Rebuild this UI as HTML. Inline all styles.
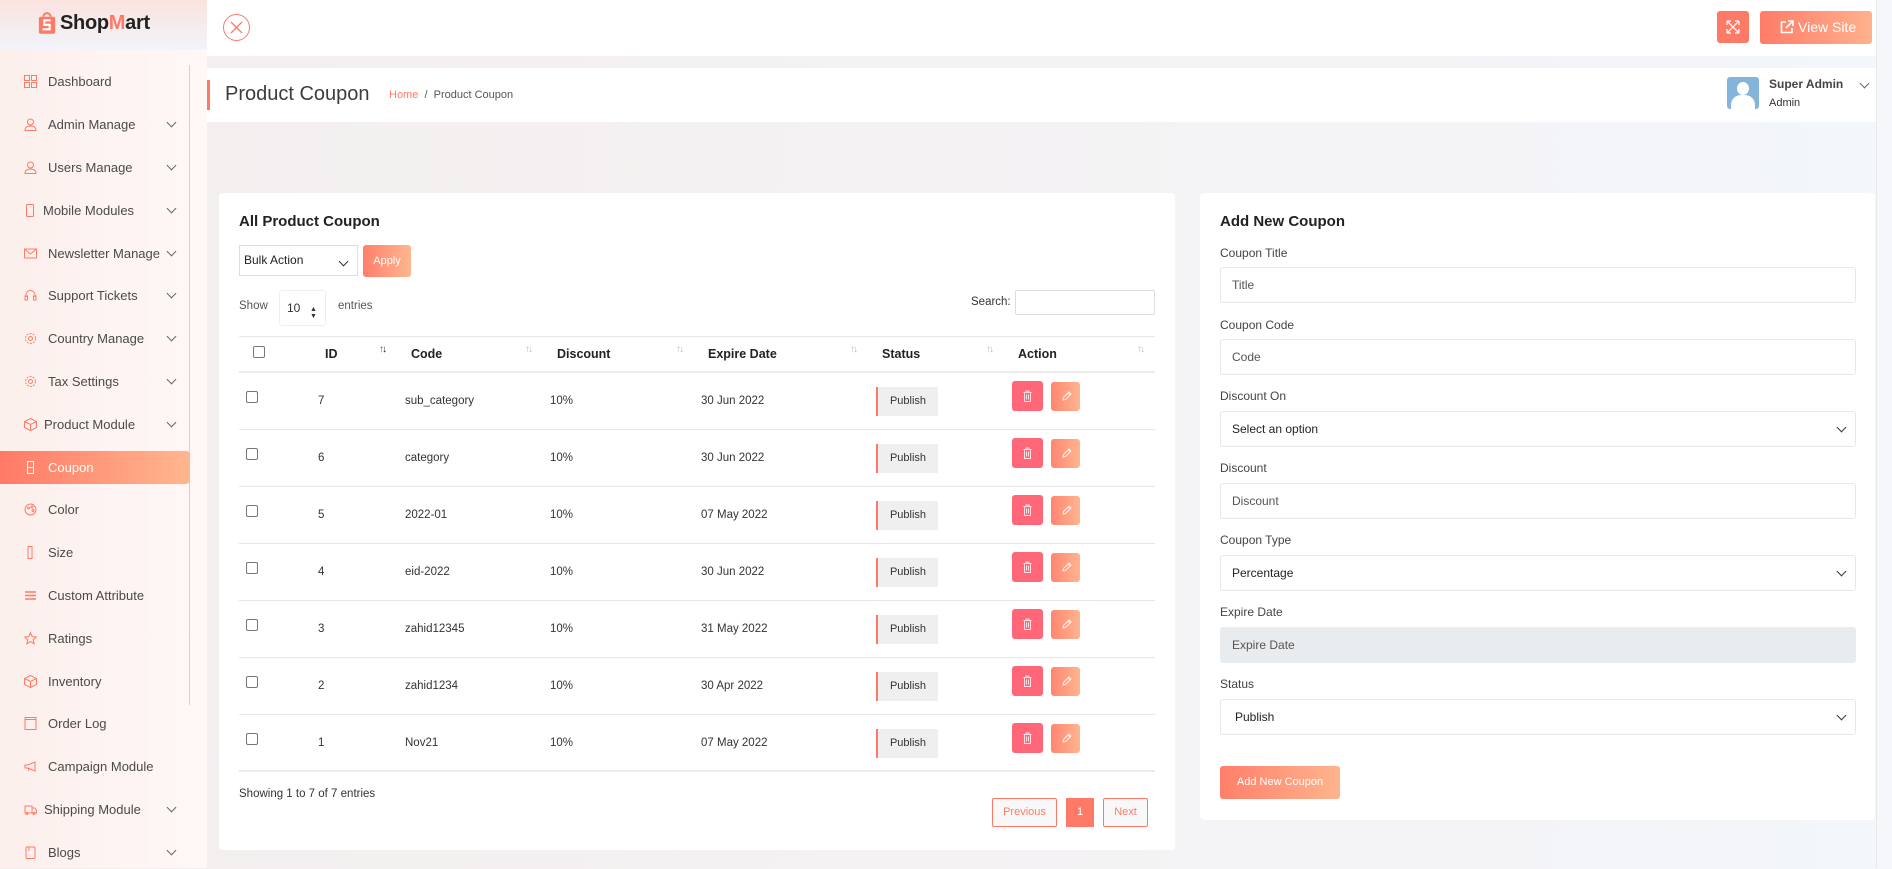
<!DOCTYPE html>
<html><head><meta charset="utf-8">
<style>
*{box-sizing:border-box;margin:0;padding:0}
body{width:1892px;height:868px;overflow:hidden;position:relative;font-family:"Liberation Sans",Arial,sans-serif;color:#333;background:linear-gradient(90deg,#f3eeee 0%,#f4f2f3 50%,#f3f6fa 100%)}
.abs{position:absolute}
#side{left:0;top:0;width:207px;height:868px;background:linear-gradient(90deg,#fcefec,#fff8f6)}
#logo{left:0;top:0;width:207px;height:50px;background:linear-gradient(180deg,#fae3df,#f1f4fa)}
.mi{position:absolute;left:0;width:190px;height:33px;font-size:13px;color:#4a4a4a;display:flex;align-items:center}
.mi .ic{position:absolute;left:24px;top:10px;width:13px;height:13px}
.mi .tx{position:absolute;left:48px}
.mi .ch{position:absolute;left:168px;top:11px;width:7px;height:7px;border-right:1.3px solid #666;border-bottom:1.3px solid #666;transform:rotate(45deg)}
.mi.act{background:linear-gradient(90deg,#ff7a66,#ffb68e);color:#fff;border-radius:0 4px 4px 0}
.card{background:#fff;border-radius:4px}
.th{position:absolute;top:337px;height:35px;line-height:35px;font-weight:bold;font-size:12.5px;color:#222}
.sa{position:absolute;top:344px;font-size:10px;color:#bbb;letter-spacing:-2px}
.row{position:absolute;left:239px;width:916px;height:57px;border-bottom:1px solid #e6e6e6;font-size:11.5px;color:#333}
.row span{position:absolute;top:0;line-height:57px}
.cb{position:absolute;width:12px;height:12px;border:1px solid #777;border-radius:2px;background:#fff}
.pub{position:absolute;left:637px;top:14px;width:62px;height:29px;background:#efefef;border-left:2px solid #ff7a66;font-size:11px;line-height:29px;text-align:center;color:#333}
.del{position:absolute;left:773px;top:8px;width:31px;height:30px;background:#ff6677;border-radius:3px}
.edt{position:absolute;left:812px;top:9px;width:29px;height:29px;background:linear-gradient(90deg,#ff8570,#ffb58f);border-radius:3px}
.del svg,.edt svg{position:absolute;left:10px;top:9px}
.lbl{position:absolute;left:1220px;font-size:12px;color:#444}
.inp{position:absolute;left:1220px;width:636px;height:36px;border:1px solid #e6e6e6;border-radius:3px;font-size:12px;color:#555;line-height:34px;padding-left:11px;background:#fff}
.sel:after{content:"";position:absolute;right:10px;top:12px;width:6px;height:6px;border-right:1.5px solid #333;border-bottom:1.5px solid #333;transform:rotate(45deg)}
</style></head><body>
<div id="side" class="abs"></div>
<div id="logo" class="abs"></div>
<svg class="abs" style="left:38px;top:11px" width="18" height="24" viewBox="0 0 20 26"><path d="M6 6a4 4 0 0 1 8 0" stroke="#ff7a66" stroke-width="2.2" fill="none"/><rect x="1" y="6" width="18" height="19" rx="2" fill="#ff7a66"/><path d="M14 10H7v5h6v5H5" stroke="#fff" stroke-width="2.3" fill="none"/></svg>
<div class="abs" style="left:60px;top:12px;font-size:20px;font-weight:bold;color:#222;letter-spacing:-0.3px">Shop<span style="color:#ff7a66">M</span>art</div>
<div class="abs" style="left:189px;top:65px;width:1px;height:640px;background:#f3c4bd"></div>

<div class="mi" style="top:65px"><svg class="ic" viewBox="0 0 13 13" fill="none" stroke="#ff7a66"><rect x=".5" y=".5" width="5" height="5"/><rect x="7.5" y=".5" width="5" height="5"/><rect x=".5" y="7.5" width="5" height="5"/><rect x="7.5" y="7.5" width="5" height="5"/></svg><span class="tx">Dashboard</span></div>
<div class="mi" style="top:108px"><svg class="ic" viewBox="0 0 13 13" fill="none" stroke="#ff7a66"><circle cx="6.5" cy="4" r="3"/><path d="M1 12.5c0-3 2-4.5 5.5-4.5s5.5 1.5 5.5 4.5z"/></svg><span class="tx">Admin Manage</span><i class="ch"></i></div>
<div class="mi" style="top:151px"><svg class="ic" viewBox="0 0 13 13" fill="none" stroke="#ff7a66"><circle cx="6.5" cy="4" r="3"/><path d="M1 12.5c0-3 2-4.5 5.5-4.5s5.5 1.5 5.5 4.5z"/></svg><span class="tx">Users Manage</span><i class="ch"></i></div>
<div class="mi" style="top:194px"><svg class="ic" viewBox="0 0 13 13" fill="none" stroke="#ff7a66"><rect x="2.5" y=".5" width="7" height="12" rx="1"/></svg><span class="tx" style="left:43px">Mobile Modules</span><i class="ch"></i></div>
<div class="mi" style="top:237px"><svg class="ic" viewBox="0 0 13 13" fill="none" stroke="#ff7a66"><rect x=".5" y="2" width="12" height="9"/><path d="M.5 2l6 5 6-5"/></svg><span class="tx">Newsletter Manage</span><i class="ch"></i></div>
<div class="mi" style="top:279px"><svg class="ic" viewBox="0 0 13 13" fill="none" stroke="#ff7a66"><path d="M2 8V6a4.5 4.5 0 0 1 9 0v2"/><rect x="1" y="7" width="2.5" height="4"/><rect x="9.5" y="7" width="2.5" height="4"/></svg><span class="tx">Support Tickets</span><i class="ch"></i></div>
<div class="mi" style="top:322px"><svg class="ic" viewBox="0 0 13 13" fill="none" stroke="#ff7a66"><circle cx="6.5" cy="6.5" r="2"/><circle cx="6.5" cy="6.5" r="5" stroke-dasharray="2 1.2"/></svg><span class="tx">Country Manage</span><i class="ch"></i></div>
<div class="mi" style="top:365px"><svg class="ic" viewBox="0 0 13 13" fill="none" stroke="#ff7a66"><circle cx="6.5" cy="6.5" r="2"/><circle cx="6.5" cy="6.5" r="5" stroke-dasharray="2 1.2"/></svg><span class="tx">Tax Settings</span><i class="ch"></i></div>
<div class="mi" style="top:408px"><svg class="ic" viewBox="0 0 13 13" fill="none" stroke="#ff7a66"><path d="M6.5 .5l6 3v6l-6 3-6-3v-6z M.5 3.5l6 3 6-3 M6.5 6.5v6"/></svg><span class="tx" style="left:44px">Product Module</span><i class="ch"></i></div>
<div class="mi act" style="top:451px"><svg class="ic" viewBox="0 0 13 13" fill="none" stroke="#fff"><rect x="3.5" y=".5" width="6" height="12"/><path d="M3.5 6.5h6"/></svg><span class="tx">Coupon</span></div>
<div class="mi" style="top:493px"><svg class="ic" viewBox="0 0 13 13" fill="none" stroke="#ff7a66"><circle cx="6.5" cy="6.5" r="5.5"/><circle cx="4.5" cy="5" r="1"/><circle cx="8" cy="4" r="1"/><circle cx="9" cy="7.5" r="1"/></svg><span class="tx">Color</span></div>
<div class="mi" style="top:536px"><svg class="ic" viewBox="0 0 13 13" fill="none" stroke="#ff7a66"><rect x="4" y=".5" width="4" height="12"/></svg><span class="tx">Size</span></div>
<div class="mi" style="top:579px"><svg class="ic" viewBox="0 0 13 13" fill="none" stroke="#ff7a66" stroke-width="1.4"><path d="M1 3h11M1 6.5h11M1 10h11"/></svg><span class="tx">Custom Attribute</span></div>
<div class="mi" style="top:622px"><svg class="ic" viewBox="0 0 13 13" fill="none" stroke="#ff7a66"><path d="M6.5 .8l1.7 3.8 4 .4-3 2.7.9 4-3.6-2.1-3.6 2.1.9-4-3-2.7 4-.4z"/></svg><span class="tx">Ratings</span></div>
<div class="mi" style="top:665px"><svg class="ic" viewBox="0 0 13 13" fill="none" stroke="#ff7a66"><path d="M6.5 .5l6 3v6l-6 3-6-3v-6z M.5 3.5l6 3 6-3 M6.5 6.5v6"/></svg><span class="tx">Inventory</span></div>
<div class="mi" style="top:707px"><svg class="ic" viewBox="0 0 13 13" fill="none" stroke="#ff7a66"><rect x="1" y=".5" width="11" height="12"/><path d="M1 2.5h11"/></svg><span class="tx">Order Log</span></div>
<div class="mi" style="top:750px"><svg class="ic" viewBox="0 0 13 13" fill="none" stroke="#ff7a66"><path d="M1 5h3l7-3v9l-7-3H1z M4 8l1 3"/></svg><span class="tx">Campaign Module</span></div>
<div class="mi" style="top:793px"><svg class="ic" viewBox="0 0 13 13" fill="none" stroke="#ff7a66"><path d="M1 3h7v7H1z M8 5h3l1.5 2.5V10H8"/><circle cx="3" cy="10.5" r="1"/><circle cx="10" cy="10.5" r="1"/></svg><span class="tx" style="left:44px">Shipping Module</span><i class="ch"></i></div>
<div class="mi" style="top:836px"><svg class="ic" viewBox="0 0 13 13" fill="none" stroke="#ff7a66"><rect x="2" y="1" width="9" height="11.5" rx="1"/><path d="M5 1v4"/></svg><span class="tx">Blogs</span><i class="ch"></i></div>

<!-- top bar -->
<div class="abs" style="left:207px;top:0;width:1669px;height:56px;background:#fff"></div>
<div class="abs" style="left:1876px;top:0;width:16px;height:868px;background:#f5f7fb;border-left:1px solid #e8e8e8"></div>
<div class="abs" style="left:223px;top:14px;width:27px;height:27px;border:1.3px solid #ff7a66;border-radius:50%"></div>
<svg class="abs" style="left:230px;top:21px" width="13" height="13"><path d="M1 1l11 11M12 1L1 12" stroke="#ff7a66" stroke-width="1.3"/></svg>
<div class="abs" style="left:1717px;top:11px;width:32px;height:32px;background:#ff7a66;border-radius:3px"></div>
<svg class="abs" style="left:1726px;top:20px" width="14" height="14" fill="none" stroke="#fff" stroke-width="1.2"><path d="M1 1l12 12M13 1L1 13M1 1h4M1 1v4M13 1h-4M13 1v4M1 13h4M1 13v-4M13 13h-4M13 13v-4"/></svg>
<div class="abs" style="left:1760px;top:11px;width:112px;height:33px;background:linear-gradient(90deg,#ff7c67,#ffb18d);border-radius:3px;color:#fff;font-size:14px;line-height:33px;padding-left:38px">View Site</div>
<svg class="abs" style="left:1780px;top:20px" width="14" height="14" fill="none" stroke="#fff" stroke-width="1.6"><path d="M6 2H1.5v10.5H12V8 M8 1h5v5 M13 1L6 8"/></svg>

<!-- page header -->
<div class="abs" style="left:207px;top:68px;width:1669px;height:54px;background:#fff"></div>
<div class="abs" style="left:207px;top:80px;width:3px;height:30px;background:#ff7a66"></div>
<div class="abs" style="left:225px;top:83px;font-size:20px;color:#3c3c3c">Product Coupon</div>
<div class="abs" style="left:389px;top:89px;font-size:11px;color:#555"><span style="color:#ff7a66">Home</span> &nbsp;/&nbsp; Product Coupon</div>
<div class="abs" style="left:1727px;top:77px;width:32px;height:32px;background:#85b4da;border-radius:3px;overflow:hidden"><div style="position:absolute;left:10px;top:5px;width:12px;height:13px;border-radius:50%;background:#fff"></div><div style="position:absolute;left:4px;top:18px;width:24px;height:18px;border-radius:10px 10px 0 0;background:#fff"></div></div>
<div class="abs" style="left:1769px;top:77px;font-size:12px;font-weight:bold;color:#444">Super Admin</div>
<div class="abs" style="left:1769px;top:97px;font-size:11px;color:#333">Admin</div>
<div class="abs" style="left:1861px;top:80px;width:7px;height:7px;border-right:1px solid #666;border-bottom:1px solid #666;transform:rotate(45deg)"></div>

<!-- left card -->
<div class="abs card" style="left:219px;top:193px;width:956px;height:657px"></div>
<div class="abs" style="left:239px;top:213px;font-size:15px;font-weight:bold;color:#222">All Product Coupon</div>
<div class="abs sel" style="left:239px;top:245px;width:119px;height:31px;border:1px solid #ddd;font-size:12px;line-height:29px;padding-left:4px;color:#222">Bulk Action</div>
<div class="abs" style="left:363px;top:245px;width:48px;height:32px;background:linear-gradient(90deg,#ff7f6c,#ffb68f);border-radius:3px;color:#fff;font-size:11px;line-height:32px;text-align:center">Apply</div>
<div class="abs" style="left:239px;top:300px;font-size:11.5px;color:#555">Show</div>
<div class="abs" style="left:279px;top:290px;width:47px;height:36px;border:1px solid #eee;border-radius:3px;font-size:12px;line-height:34px;padding-left:7px;color:#333">10 <span style="font-size:7px;position:absolute;left:30px;top:2px">&#9650;</span><span style="font-size:7px;position:absolute;left:30px;top:9px">&#9660;</span></div>
<div class="abs" style="left:338px;top:300px;font-size:11.5px;color:#555">entries</div>
<div class="abs" style="left:971px;top:296px;font-size:11.5px;color:#333">Search:</div>
<div class="abs" style="left:1015px;top:290px;width:140px;height:25px;border:1px solid #ddd;border-radius:2px"></div>

<div class="abs" style="left:239px;top:336px;width:916px;height:1px;background:#e8e8e8"></div>
<div class="abs" style="left:239px;top:371px;width:916px;height:2px;background:#ececec"></div>
<div class="cb" style="left:253px;top:346px"></div>
<div class="th" style="left:325px">ID</div><div class="sa" style="left:379px;color:#555">↑<span style="color:#222">↓</span></div>
<div class="th" style="left:411px">Code</div><div class="sa" style="left:525px">↑↓</div>
<div class="th" style="left:557px">Discount</div><div class="sa" style="left:676px">↑↓</div>
<div class="th" style="left:708px">Expire Date</div><div class="sa" style="left:850px">↑↓</div>
<div class="th" style="left:882px">Status</div><div class="sa" style="left:986px">↑↓</div>
<div class="th" style="left:1018px">Action</div><div class="sa" style="left:1137px">↑↓</div>

<svg width="0" height="0" style="position:absolute"><defs>
<symbol id="tr" viewBox="0 0 11 12"><path d="M1.5 2.5h8M4 2.5V1h3v1.5M2.5 2.5v9h6v-9M4.5 4.5v5M6.5 4.5v5" stroke="#fff" stroke-opacity=".8" fill="none"/></symbol>
<symbol id="pe" viewBox="0 0 11 11"><path d="M2 9l.5-2.5L8 1l2 2-5.5 5.5z M7 2l2 2" stroke="#fff" stroke-opacity=".85" fill="none"/></symbol>
</defs></svg>

<div class="row" style="top:373px"><i class="cb" style="left:7px;top:18px"></i><span style="left:79px">7</span><span style="left:166px">sub_category</span><span style="left:311px">10%</span><span style="left:462px">30 Jun 2022</span><div class="pub">Publish</div><div class="del"><svg width="11" height="12"><use href="#tr"/></svg></div><div class="edt"><svg width="11" height="11"><use href="#pe"/></svg></div></div>
<div class="row" style="top:430px"><i class="cb" style="left:7px;top:18px"></i><span style="left:79px">6</span><span style="left:166px">category</span><span style="left:311px">10%</span><span style="left:462px">30 Jun 2022</span><div class="pub">Publish</div><div class="del"><svg width="11" height="12"><use href="#tr"/></svg></div><div class="edt"><svg width="11" height="11"><use href="#pe"/></svg></div></div>
<div class="row" style="top:487px"><i class="cb" style="left:7px;top:18px"></i><span style="left:79px">5</span><span style="left:166px">2022-01</span><span style="left:311px">10%</span><span style="left:462px">07 May 2022</span><div class="pub">Publish</div><div class="del"><svg width="11" height="12"><use href="#tr"/></svg></div><div class="edt"><svg width="11" height="11"><use href="#pe"/></svg></div></div>
<div class="row" style="top:544px"><i class="cb" style="left:7px;top:18px"></i><span style="left:79px">4</span><span style="left:166px">eid-2022</span><span style="left:311px">10%</span><span style="left:462px">30 Jun 2022</span><div class="pub">Publish</div><div class="del"><svg width="11" height="12"><use href="#tr"/></svg></div><div class="edt"><svg width="11" height="11"><use href="#pe"/></svg></div></div>
<div class="row" style="top:601px"><i class="cb" style="left:7px;top:18px"></i><span style="left:79px">3</span><span style="left:166px">zahid12345</span><span style="left:311px">10%</span><span style="left:462px">31 May 2022</span><div class="pub">Publish</div><div class="del"><svg width="11" height="12"><use href="#tr"/></svg></div><div class="edt"><svg width="11" height="11"><use href="#pe"/></svg></div></div>
<div class="row" style="top:658px"><i class="cb" style="left:7px;top:18px"></i><span style="left:79px">2</span><span style="left:166px">zahid1234</span><span style="left:311px">10%</span><span style="left:462px">30 Apr 2022</span><div class="pub">Publish</div><div class="del"><svg width="11" height="12"><use href="#tr"/></svg></div><div class="edt"><svg width="11" height="11"><use href="#pe"/></svg></div></div>
<div class="row" style="top:715px;border-bottom:2px solid #ececec"><i class="cb" style="left:7px;top:18px"></i><span style="left:79px">1</span><span style="left:166px">Nov21</span><span style="left:311px">10%</span><span style="left:462px">07 May 2022</span><div class="pub">Publish</div><div class="del"><svg width="11" height="12"><use href="#tr"/></svg></div><div class="edt"><svg width="11" height="11"><use href="#pe"/></svg></div></div>

<div class="abs" style="left:239px;top:788px;font-size:11.5px;color:#333">Showing 1 to 7 of 7 entries</div>
<div class="abs" style="left:992px;top:798px;width:65px;height:29px;border:1px solid #ff7a66;border-radius:2px;background:#f8f8f8;color:#ff7a66;font-size:11px;line-height:27px;text-align:center">Previous</div>
<div class="abs" style="left:1066px;top:798px;width:28px;height:29px;background:#ff7a66;color:#fff;font-size:11px;line-height:29px;text-align:center">1</div>
<div class="abs" style="left:1103px;top:798px;width:45px;height:29px;border:1px solid #ff7a66;border-radius:2px;background:#f8f8f8;color:#ff7a66;font-size:11px;line-height:27px;text-align:center">Next</div>

<!-- right card -->
<div class="abs card" style="left:1200px;top:193px;width:675px;height:627px"></div>
<div class="abs" style="left:1220px;top:213px;font-size:15px;font-weight:bold;color:#222">Add New Coupon</div>
<div class="lbl" style="top:246px">Coupon Title</div><div class="inp" style="top:267px">Title</div>
<div class="lbl" style="top:318px">Coupon Code</div><div class="inp" style="top:339px">Code</div>
<div class="lbl" style="top:389px">Discount On</div><div class="inp sel" style="top:411px;color:#222">Select an option</div>
<div class="lbl" style="top:461px">Discount</div><div class="inp" style="top:483px">Discount</div>
<div class="lbl" style="top:533px">Coupon Type</div><div class="inp sel" style="top:555px;color:#222">Percentage</div>
<div class="lbl" style="top:605px">Expire Date</div><div class="inp" style="top:627px;background:#e9ecef;border-color:#e9ecef">Expire Date</div>
<div class="lbl" style="top:677px">Status</div><div class="inp sel" style="top:699px;color:#222;padding-left:14px">Publish</div>
<div class="abs" style="left:1220px;top:766px;width:120px;height:33px;background:linear-gradient(90deg,#ff7f6a,#ffb48e);border-radius:3px;color:#fff;font-size:11px;line-height:33px;text-align:center">Add New Coupon</div>
</body></html>
